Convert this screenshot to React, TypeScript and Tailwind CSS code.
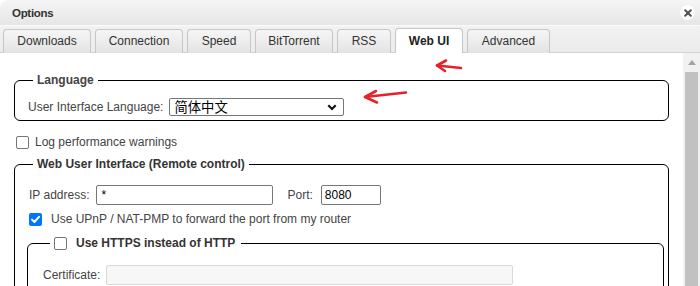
import React from 'react';

const tabs = [
  { label: 'Downloads', w: 'w-[88px]' },
  { label: 'Connection', w: 'w-[88px]' },
  { label: 'Speed', w: 'w-[64px]' },
  { label: 'BitTorrent', w: 'w-[78px]' },
  { label: 'RSS', w: 'w-[54px]' },
  { label: 'Web UI', w: 'w-[68px]', active: true },
  { label: 'Advanced', w: 'w-[83px]' },
];

const CheckBox: React.FC<{ checked?: boolean }> = ({ checked }) =>
  checked ? (
    <span className="w-[13px] h-[13px] shrink-0 rounded-[2px] bg-[#0075ff] flex items-center justify-center">
      <svg width="11" height="11" viewBox="0 0 11 11">
        <path d="M2 5.6 L4.4 8 L9 2.8" fill="none" stroke="#fff" strokeWidth="2" strokeLinecap="round" strokeLinejoin="round" />
      </svg>
    </span>
  ) : (
    <span className="w-[13px] h-[13px] shrink-0 rounded-[2px] border border-[#767676] bg-white" />
  );

const App: React.FC = () => {
  return (
    <div className="relative w-[700px] h-[286px] overflow-hidden bg-white font-['Liberation_Sans',Arial,sans-serif] text-[12px] leading-[14px] text-[#444] flex flex-col">
      {/* title bar */}
      <div className="h-[26px] shrink-0 flex items-center justify-between pl-[12px] pr-[5px] bg-gradient-to-b from-[#f5f5f5] to-[#e6e6e6] rounded-tl-[8px] border-b border-[#fafafa]">
        <span className="font-bold text-[11.5px] text-[#333] tracking-[-0.3px]">Options</span>
        <span className="w-[15px] h-[15px] rounded-full bg-white flex items-center justify-center">
          <svg width="8" height="8" viewBox="0 0 8 8">
            <path d="M1.2 1.2 L6.8 6.8 M6.8 1.2 L1.2 6.8" stroke="#555" strokeWidth="2" strokeLinecap="round" />
          </svg>
        </span>
      </div>

      {/* tabs */}
      <div className="h-[27px] shrink-0 flex items-end gap-[4px] pl-[3px] bg-gradient-to-b from-[#f2f2f2] to-[#ebebeb] border-b border-[#d3d3d3]">
        {tabs.map((t) => (
          <div
            key={t.label}
            className={`${t.w} -mb-px pb-[1px] flex items-center justify-center rounded-t-[4px] border border-b-0 border-[#c6c6c6] ${
              t.active ? 'bg-white font-bold text-[#222] h-[25px]' : 'h-[24px] bg-gradient-to-b from-[#f6f6f6] to-[#e3e3e3] text-[#333] border-b border-b-[#d3d3d3]'
            }`}
          >
            {t.label}
          </div>
        ))}
      </div>

      <div className="flex-1 min-h-0 flex">
        {/* panel */}
        <div className="flex-1 min-w-0 px-[14px] pt-[20px]">
          <fieldset className="border border-black rounded-[6px] pl-[13px] pr-[13px] pt-[11px] pb-[4px]">
            <legend className="ml-[5px] px-[4px] font-bold text-[#444] leading-[14px]">Language</legend>
            <div className="h-[18px] flex items-center">
              <span>User Interface Language:</span>
              <div className="ml-[6px] w-[175px] h-[18px] border border-[#767676] rounded-[2px] flex items-center justify-between pl-[4px] pr-[6px] text-[13.33px] text-black font-['Noto_Sans_CJK_SC',sans-serif] leading-none">
                <span>简体中文</span>
                <svg width="10" height="7" viewBox="0 0 10 7">
                  <path d="M1.3 1.3 L5 5 L8.7 1.3" fill="none" stroke="#111" strokeWidth="2.2" />
                </svg>
              </div>
            </div>
          </fieldset>

          <div className="mt-[14px] h-[14px] flex items-center pl-[2px]">
            <CheckBox />
            <span className="ml-[6px]">Log performance warnings</span>
          </div>

          <fieldset className="mt-[8px] border border-black rounded-[6px] pl-[12px] pr-[4px] pt-[14px] pb-[10px]">
            <legend className="ml-[6px] px-[4px] font-bold text-[#333] leading-[14px]">Web User Interface (Remote control)</legend>
            <div className="h-[20px] flex items-center pl-[2px]">
              <span>IP address:</span>
              <div className="ml-[7px] w-[177px] h-[20px] border border-[#767676] rounded-[2px] px-[4px] flex items-center text-black">*</div>
              <span className="ml-[14px]">Port:</span>
              <div className="ml-[8px] w-[60px] h-[20px] border border-[#767676] rounded-[2px] px-[3px] flex items-center text-black">8080</div>
            </div>
            <div className="mt-[7px] h-[14px] flex items-center pl-[2px]">
              <CheckBox checked />
              <span className="ml-[9px]">Use UPnP / NAT-PMP to forward the port from my router</span>
            </div>
            <fieldset className="mt-[10px] border border-black rounded-[6px] pl-[14px] pr-[10px] pt-[15px] pb-[10px]">
              <legend className="ml-[8px] pl-[4px] pr-[6px] font-bold text-[#333] leading-[14px]">
                <span className="flex items-center">
                  <CheckBox />
                  <span className="ml-[9px]">Use HTTPS instead of HTTP</span>
                </span>
              </legend>
              <div className="h-[20px] flex items-center pl-[1px]">
                <span>Certificate:</span>
                <div className="ml-[6px] w-[407px] h-[20px] border border-[#d9d9d9] rounded-[2px] bg-[#f7f7f7]" />
              </div>
            </fieldset>
          </fieldset>
        </div>

        {/* scrollbar */}
        <div className="w-[17px] shrink-0 bg-[#f1f1f1] flex flex-col items-center">
          <div className="h-[19px] flex items-center justify-center">
            <svg width="8" height="5" viewBox="0 0 8 5">
              <path d="M0 5 L4 0 L8 5 Z" fill="#a3a3a3" />
            </svg>
          </div>
          <div className="flex-1 w-[13px] bg-[#c1c1c1]" />
        </div>
      </div>

      {/* red annotation arrows */}
      <svg className="absolute inset-0 pointer-events-none" width="700" height="286" viewBox="0 0 700 286">
        <g fill="none" stroke="#e4222a" strokeWidth="2.6" strokeLinecap="round" strokeLinejoin="round">
          <path d="M461 68 L437 65.5" />
          <path d="M446 60.5 L437 65.5 L445 71" />
          <path d="M406 92.5 L365 97" />
          <path d="M376 91 L365 97 L377 102.5" />
        </g>
      </svg>
    </div>
  );
};

export default App;
